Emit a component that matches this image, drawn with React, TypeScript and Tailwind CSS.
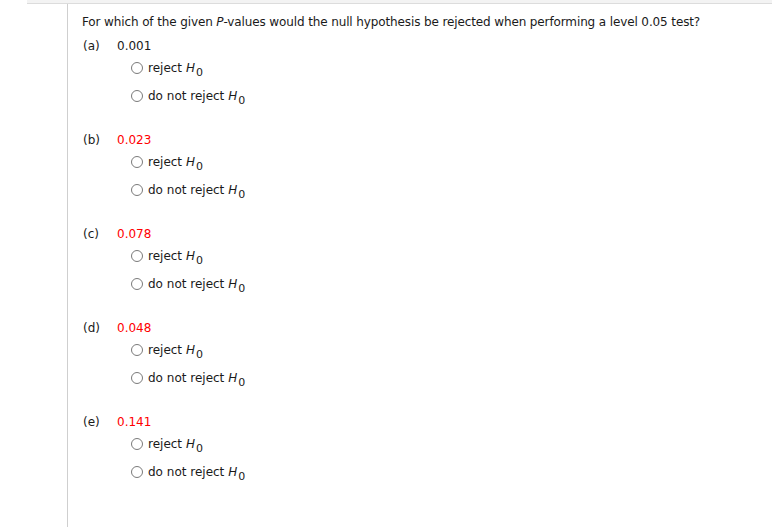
import React from "react";

type Part = { label: string; value: string; highlight: boolean };

const parts: Part[] = [
  { label: "(a)", value: "0.001", highlight: false },
  { label: "(b)", value: "0.023", highlight: true },
  { label: "(c)", value: "0.078", highlight: true },
  { label: "(d)", value: "0.048", highlight: true },
  { label: "(e)", value: "0.141", highlight: true },
];

function H0() {
  return (
    <span className="whitespace-nowrap">
      <i>H</i>
      <sub className="relative top-[4px] ml-[1px] text-[11px] not-italic">0</sub>
    </span>
  );
}

function Radio({ children }: { children: React.ReactNode }) {
  return (
    <label className="flex items-center gap-[5px] h-[20px]">
      <span className="inline-block w-[12px] h-[12px] rounded-full border border-[#7a7a7a] bg-white" />
      <span>{children}</span>
    </label>
  );
}

export default function App() {
  return (
    <div
      className="min-h-[527px] bg-white text-[12px] text-[#1a1a1a] flex flex-col"
      style={{ fontFamily: '"DejaVu Sans", Verdana, sans-serif' }}
    >
      <div className="ml-[27px] h-[4px] bg-[#f3f3f3] border-b border-[#dcdcdc]" />
      <div className="ml-[67px] flex-1 border-l border-[#cfcfcf] pl-[14px] pt-[11px]">
        <p className="h-[14px] leading-[14px] tracking-[-0.12px] whitespace-nowrap">
          For which of the given <i>P</i>-values would the null hypothesis be rejected when performing a level 0.05 test?
        </p>
        <div className="mt-[10px] flex flex-col">
          {parts.map((p) => (
            <div key={p.label} className="h-[94px] flex flex-col">
              <div className="flex h-[14px] leading-[14px]">
                <span className="w-[35px] pl-[1px]">{p.label}</span>
                <span className={p.highlight ? "text-[#ff0000]" : "text-[#1a1a1a]"}>{p.value}</span>
              </div>
              <div className="ml-[49px] mt-[5px] flex flex-col gap-[8px]">
                <Radio>
                  reject <H0 />
                </Radio>
                <Radio>
                  do not reject <H0 />
                </Radio>
              </div>
            </div>
          ))}
        </div>
      </div>
    </div>
  );
}
